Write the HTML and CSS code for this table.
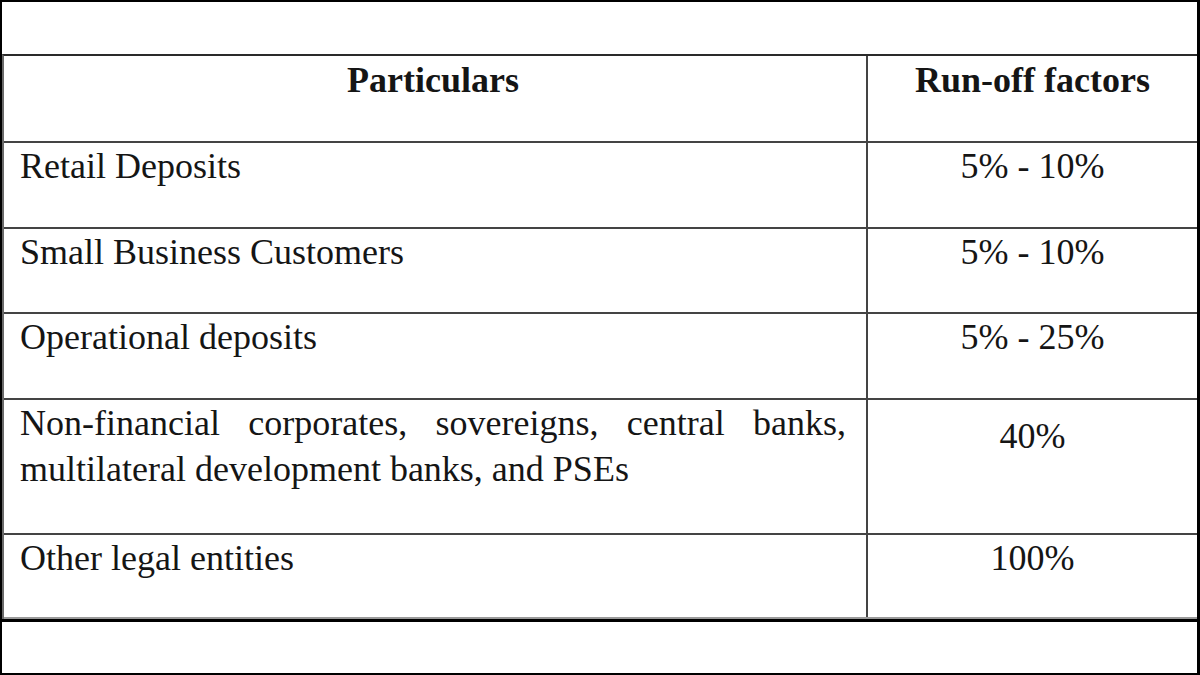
FILE: index.html
```html
<!DOCTYPE html>
<html lang="en">
<head>
<meta charset="utf-8">
<title>Run-off factors</title>
<link rel="stylesheet" href="styles.css">
</head>
<body>
<div class="frame">
  <div class="table">
    <div class="row head h87">
      <div class="cell c1">Particulars</div>
      <div class="cell c2">Run-off factors</div>
    </div>
    <div class="row h86">
      <div class="cell c1">Retail Deposits</div>
      <div class="cell c2">5% - 10%</div>
    </div>
    <div class="row h85">
      <div class="cell c1">Small Business Customers</div>
      <div class="cell c2">5% - 10%</div>
    </div>
    <div class="row h86">
      <div class="cell c1">Operational deposits</div>
      <div class="cell c2">5% - 25%</div>
    </div>
    <div class="row h135">
      <div class="cell c1 just">Non-financial corporates, sovereigns, central banks, multilateral development banks, and PSEs</div>
      <div class="cell c2 mid">40%</div>
    </div>
    <div class="row h84">
      <div class="cell c1">Other legal entities</div>
      <div class="cell c2">100%</div>
    </div>
  </div>
  <div class="foot"></div>
</div>
</body>
</html>
```

FILE: styles.css
```css
html, body {
  margin: 0;
  padding: 0;
  background: #ffffff;
}
.frame {
  width: 1200px;
  height: 675px;
  box-sizing: border-box;
  border: 2px solid #000;
  border-right-width: 3px;
  padding-top: 52px;
  font-family: "Liberation Serif", "Times New Roman", serif;
  font-size: 36px;
  line-height: 46px;
  color: #151515;
  overflow: hidden;
}
.table {
  border-top: 2px solid #2a2a2a;
  border-left: 2px solid #6a6a6a;
}
.row {
  display: flex;
  box-sizing: border-box;
  border-bottom: 2px solid #444;
}
.h87 { height: 87px; }
.h86 { height: 86px; }
.h85 { height: 85px; }
.h135 { height: 135px; }
.h84 { height: 84px; border-bottom-color: #9a9a9a; }
.cell {
  box-sizing: border-box;
}
.c1 {
  width: 864px;
  padding: 0 20px 0 16px;
  border-right: 2px solid #444;
}
.c2 {
  flex: 1;
  text-align: center;
}
.mid {
  padding-top: 13px;
}
.head .cell {
  font-weight: bold;
  text-align: center;
  padding-top: 1px;
}
.just {
  text-align: justify;
}
.foot {
  border-top: 3px solid #000;
}
```
